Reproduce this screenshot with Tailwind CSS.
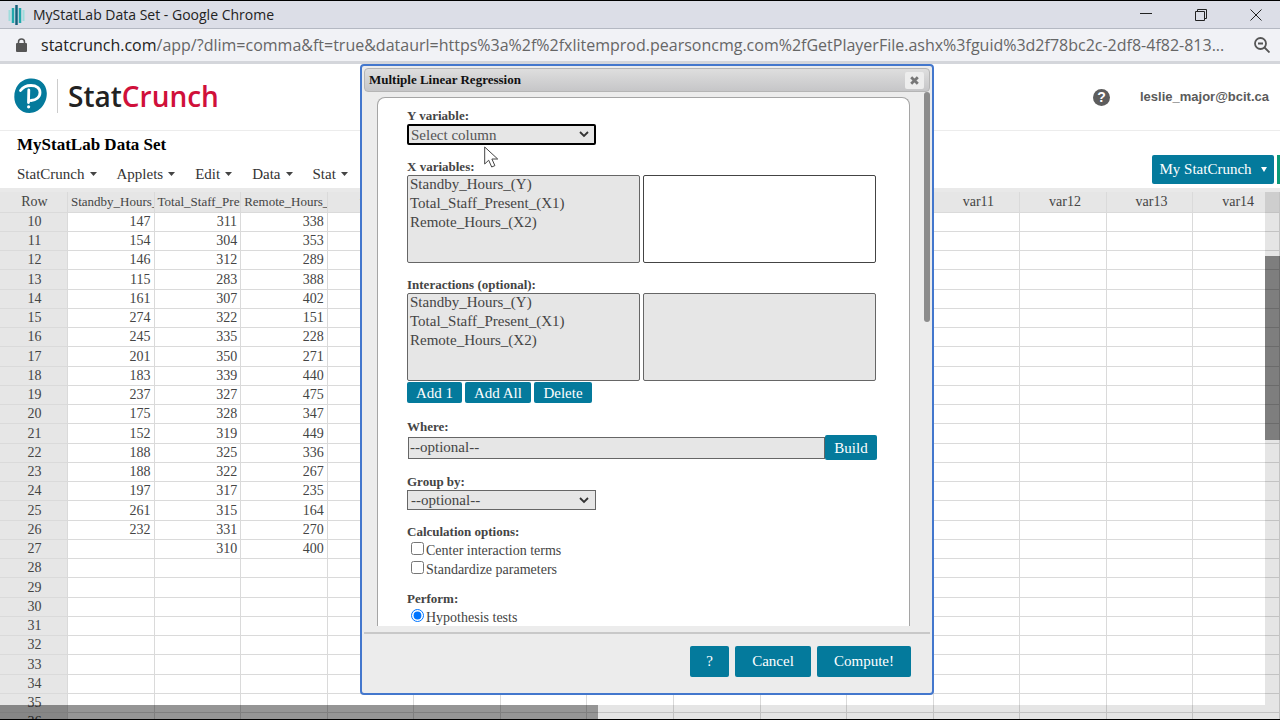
<!DOCTYPE html>
<html lang="en">
<head>
    <meta charset="UTF-8">
    <meta name="viewport" content="width=device-width, initial-scale=1.0">
    <title>MyStatLab Data Set</title>
    <script src="https://cdn.jsdelivr.net/npm/@tailwindcss/browser@4"></script>
</head>
<body class="relative h-screen overflow-hidden flex flex-col border-y border-black bg-white font-['Liberation_Serif',serif] text-[#444]">

    <!-- Window title bar -->
    <div class="h-7 shrink-0 flex items-center justify-between bg-[#dcdee7] border-b border-[#b4b8c2] pl-2 pr-[18px] font-['Open_Sans',sans-serif] text-[#222]">
        <div class="flex items-center gap-2">
            <svg class="w-[17px] h-5" viewBox="0 0 17 20">
                <path d="M1.500 5v11" stroke="#9fdcdc" stroke-width="2"/>
                <path d="M5 3v15" stroke="#23a9ad" stroke-width="2.500"/>
                <path d="M8.500 0v20" stroke="#17607c" stroke-width="2.500"/>
                <path d="M12 3v15" stroke="#23a9ad" stroke-width="2.500"/>
                <path d="M15.500 5v11" stroke="#9fdcdc" stroke-width="2"/>
            </svg>
            <span class="text-sm">MyStatLab Data Set - Google Chrome</span>
        </div>
        <div class="flex items-center gap-[43px]">
            <button type="button" aria-label="Minimize"><svg class="w-3 h-3" viewBox="0 0 12 12"><path d="M0 4.500h12" stroke="#222"/></svg></button>
            <button type="button" aria-label="Restore"><svg class="w-3 h-3" viewBox="0 0 12 12" fill="none" stroke="#222"><path d="M.5 2.500h9v9h-9zM2.500 2.500v-2h9v9h-2"/></svg></button>
            <button type="button" aria-label="Close"><svg class="w-3 h-3" viewBox="0 0 12 12"><path d="M.5.5l11 11M11.500.5l-11 11" stroke="#222"/></svg></button>
        </div>
    </div>

    <!-- Address bar -->
    <div class="h-[35px] shrink-0 flex items-center bg-[#f1f2f6] border-b-3 border-[#d4d6db] pl-4 pr-[10px] font-['Open_Sans',sans-serif]">
        <svg class="w-[11px] h-[14px] shrink-0" viewBox="0 0 11 14">
            <path d="M2.500 6V4a3 3 0 0 1 6 0v2" fill="none" stroke="#555" stroke-width="1.500"/>
            <rect y="5" width="11" height="9" rx="1" fill="#555"/>
        </svg>
        <div class="ml-[14px] flex-1 whitespace-nowrap text-base text-[#666]"><span class="text-[#222]">statcrunch.com</span>/app/?dlim=comma&amp;ft=true&amp;dataurl=https%3a%2f%2fxlitemprod.pearsoncmg.com%2fGetPlayerFile.ashx%3fguid%3d2f78bc2c-2df8-4f82-813...</div>
        <button type="button" aria-label="Zoom">
            <svg class="w-4 h-4" viewBox="0 0 16 16" fill="none" stroke="#555" stroke-width="1.800">
                <circle cx="6.500" cy="6.500" r="5.500"/><path d="M10.500 10.500l5 5M4 6.500h5"/>
            </svg>
        </button>
    </div>

    <!-- App header -->
    <header class="h-[67px] shrink-0 flex items-center justify-between border-b border-[#ececec] pl-[14px] pr-[11px] pb-[3px]">
        <div class="flex items-center">
            <svg class="w-[33px] h-9" viewBox="0 0 33 36">
                <path d="M14 .8C23 -1 32.500 4 32.800 15c.3 10-7 20-17.300 20C6 35 .3 27 .3 19 .3 9 6 2.500 14 .8z" fill="#047a9c"/>
                <path d="M6.500 12.500C9 9 13 7.500 17 7.500c5.500 0 9 2.700 9 7 0 4.700-4 7.500-9 8M14.800 12l-.3 12.500" fill="none" stroke="#fff" stroke-width="2.800" stroke-linecap="round"/>
                <circle cx="14.600" cy="28.800" r="1.600" fill="#fff"/>
            </svg>
            <div class="ml-[10px] h-[34px] border-l border-[#ccc]"></div>
            <div class="ml-[10px] font-['Open_Sans',sans-serif] font-semibold text-[28px] leading-9 text-[#222]">Stat<span class="text-[#d0103a]">Crunch</span></div>
        </div>
        <div class="flex items-center gap-[30px] pt-[3px] font-['Liberation_Sans',sans-serif]">
            <button type="button" aria-label="Help" class="w-[17px] h-[17px] rounded-full bg-[#5d5d5d] text-white text-sm leading-[17px] font-bold">?</button>
            <a href="#" class="text-[13px] font-bold text-[#5a5a5a]">leslie_major@bcit.ca</a>
        </div>
    </header>

    <!-- Data set name and menus -->
    <div class="h-[57px] shrink-0 flex items-end justify-between pl-[17px]">
        <div>
            <h1 class="mb-[3px] text-[17px] leading-6 font-bold text-black">MyStatLab Data Set</h1>
            <nav class="h-7 flex items-center gap-5 text-[15px] text-[#333]">
                <button type="button" class="flex items-center gap-[5px]">StatCrunch<svg class="w-[7px] h-1" viewBox="0 0 7 4"><path d="M0 0h7L3.500 4z" fill="#444"/></svg></button>
                <button type="button" class="flex items-center gap-[5px]">Applets<svg class="w-[7px] h-1" viewBox="0 0 7 4"><path d="M0 0h7L3.500 4z" fill="#444"/></svg></button>
                <button type="button" class="flex items-center gap-[5px]">Edit<svg class="w-[7px] h-1" viewBox="0 0 7 4"><path d="M0 0h7L3.500 4z" fill="#444"/></svg></button>
                <button type="button" class="flex items-center gap-[5px]">Data<svg class="w-[7px] h-1" viewBox="0 0 7 4"><path d="M0 0h7L3.500 4z" fill="#444"/></svg></button>
                <button type="button" class="flex items-center gap-[5px]">Stat<svg class="w-[7px] h-1" viewBox="0 0 7 4"><path d="M0 0h7L3.500 4z" fill="#444"/></svg></button>
            </nav>
        </div>
        <div class="flex gap-[3px] mb-1">
            <button type="button" class="h-[29px] w-[122px] flex items-center justify-center gap-[9px] rounded-xs bg-[#047a9c] text-[15px] text-white">My StatCrunch<svg class="w-[6px] h-[5px]" viewBox="0 0 6 5"><path d="M0 0h6L3 5z" fill="#fff"/></svg></button>
            <div class="w-[3px] bg-[#0a9a78]"></div>
        </div>
    </div>

    <!-- Data table -->
    <main class="relative flex-1 min-h-0 overflow-hidden border-t-4 border-[#e9e9e9]">
        <table class="w-full table-fixed border-separate border-spacing-0 text-sm leading-[18px]">
            <thead>
                <tr id="head" class="h-[21px] bg-[#e6e6e6]">
                    <th class="w-[68px] p-0 pl-[2px] font-normal border-r border-b border-[#dadada]">Row</th>
                </tr>
            </thead>
            <tbody id="rows" class="[&>tr]:h-[19px] [&>tr:nth-child(4n)]:h-[20px]"></tbody>
        </table>
        <div class="absolute right-0 top-0 bottom-[14px] w-[15px] bg-black/10">
            <div class="mt-16 h-[184px] bg-black/45"></div>
        </div>
        <div class="absolute inset-x-0 bottom-0 h-[14px] bg-black/10">
            <div class="w-[598px] h-full bg-black/35"></div>
        </div>
    </main>

    <!-- Regression dialog -->
    <form role="dialog" aria-labelledby="dialog-title" class="absolute left-[360px] top-[63px] w-[574px] h-[631px] flex flex-col rounded border-2 border-[#4377cd] bg-[#ececec] p-[2px]">
        <div class="h-6 shrink-0 flex items-center justify-between rounded border border-[#b5b5b5] bg-linear-to-b from-[#dedede] to-[#c6c6c8] pl-1 pr-[5px]">
            <h2 id="dialog-title" class="text-[13px] font-bold text-[#111]">Multiple Linear Regression</h2>
            <button type="button" aria-label="Close dialog" class="w-[19px] h-[17px] flex items-center justify-center rounded-xs bg-[#ededed]">
                <svg class="w-[9px] h-[9px]" viewBox="0 0 9 9"><path d="M1.200 1.200l6.600 6.600M7.800 1.200L1.200 7.800" stroke="#777" stroke-width="2.800"/></svg>
            </button>
        </div>

        <div class="relative flex-1 min-h-0 pt-[5px] pl-[13px] pr-5 pb-[6px] border-b-2 border-[#c8c8c8]">
            <div class="h-full overflow-hidden rounded-t-lg border border-b-0 border-[#a5a5a5] bg-white pl-[29px] pr-8 pt-2 text-sm leading-[19px]">
                <label for="y-var" class="block h-[18px] text-[13px] font-bold">Y variable:</label>
                <div class="relative w-[189px]">
                    <select id="y-var" class="block w-full h-[21px] appearance-none rounded-xs border-2 border-black bg-[#e6e6e6] px-[2px] text-[15px] leading-4 text-[#555]">
                        <option>Select column</option>
                    </select>
                    <svg class="absolute right-[7px] top-[7px] w-[10px] h-[7px] pointer-events-none" viewBox="0 0 10 7"><path d="M1 1l4 4 4-4" fill="none" stroke="#333" stroke-width="1.800"/></svg>
                </div>

                <label for="x-vars" class="block mt-3 h-[18px] text-[13px] font-bold">X variables:</label>
                <div class="flex gap-[3px]">
                    <select id="x-vars" multiple size="4" class="w-[233px] h-[88px] overflow-hidden rounded-xs border border-[#666] bg-[#e6e6e6] text-[15px] [&>option]:h-[19px] [&>option]:px-[2px] [&>option]:py-0">
                        <option>Standby_Hours_(Y)</option>
                        <option>Total_Staff_Present_(X1)</option>
                        <option>Remote_Hours_(X2)</option>
                    </select>
                    <select multiple size="4" aria-label="Selected X variables" class="w-[233px] h-[88px] overflow-hidden rounded-xs border border-[#444] bg-white"></select>
                </div>

                <label for="interactions" class="block mt-3 h-[18px] text-[13px] font-bold">Interactions (optional):</label>
                <div class="flex gap-[3px]">
                    <select id="interactions" multiple size="4" class="w-[233px] h-[88px] overflow-hidden rounded-xs border border-[#666] bg-[#e6e6e6] text-[15px] [&>option]:h-[19px] [&>option]:px-[2px] [&>option]:py-0">
                        <option>Standby_Hours_(Y)</option>
                        <option>Total_Staff_Present_(X1)</option>
                        <option>Remote_Hours_(X2)</option>
                    </select>
                    <select multiple size="4" aria-label="Selected interactions" class="w-[233px] h-[88px] overflow-hidden rounded-xs border border-[#666] bg-[#e6e6e6]"></select>
                </div>
                <div class="mt-px flex gap-[3px] text-[15px] font-medium text-white">
                    <button type="button" class="w-[55px] h-[21px] leading-5 rounded-xs bg-[#047a9c]">Add 1</button>
                    <button type="button" class="w-[66px] h-[21px] leading-5 rounded-xs bg-[#047a9c]">Add All</button>
                    <button type="button" class="w-[58px] h-[21px] leading-5 rounded-xs bg-[#047a9c]">Delete</button>
                </div>

                <label for="where" class="block mt-[14px] h-[18px] text-[13px] font-bold">Where:</label>
                <div class="flex items-center">
                    <input id="where" type="text" value="--optional--" class="ml-px w-[417px] h-[22px] border border-[#666] bg-[#e6e6e6] px-px text-[15px]">
                    <button type="button" class="w-[52px] h-[25px] rounded-xs bg-[#047a9c] text-[15px] leading-6 font-medium text-white">Build</button>
                </div>

                <label for="group-by" class="block mt-3 h-[18px] text-[13px] font-bold">Group by:</label>
                <div class="relative w-[189px]">
                    <select id="group-by" class="block w-full h-5 appearance-none border border-[#666] bg-[#e6e6e6] px-[3px] text-[15px] leading-4">
                        <option>--optional--</option>
                    </select>
                    <svg class="absolute right-[7px] top-[7px] w-[10px] h-[7px] pointer-events-none" viewBox="0 0 10 7"><path d="M1 1l4 4 4-4" fill="none" stroke="#333" stroke-width="1.800"/></svg>
                </div>

                <fieldset class="mt-3">
                    <legend class="text-[13px] font-bold">Calculation options:</legend>
                    <label class="flex h-[19px] gap-[2px]"><input type="checkbox" class="ml-1 mt-px w-[13px] h-[13px]">Center interaction terms</label>
                    <label class="flex h-[19px] gap-[2px]"><input type="checkbox" class="ml-1 mt-px w-[13px] h-[13px]">Standardize parameters</label>
                </fieldset>

                <fieldset class="mt-[10px]">
                    <legend class="text-[13px] font-bold">Perform:</legend>
                    <label class="flex h-[19px] gap-[2px]"><input type="radio" name="perform" checked class="ml-1 mt-px w-[13px] h-[13px]">Hypothesis tests</label>
                </fieldset>
            </div>
            <div class="absolute right-0 top-0 w-[6px] h-[230px] rounded-full bg-[#8c8c8c]"></div>
        </div>

        <div class="h-[57px] shrink-0 flex items-start justify-end gap-[6px] pt-3 pr-[19px] text-[15px] font-medium text-white">
            <button type="button" class="w-[39px] h-[31px] rounded-xs bg-[#047a9c]">?</button>
            <button type="button" class="w-[76px] h-[31px] rounded-xs bg-[#047a9c]">Cancel</button>
            <button type="submit" class="w-[94px] h-[31px] rounded-xs bg-[#047a9c]">Compute!</button>
        </div>
    </form>

    <!-- Mouse pointer -->
    <svg class="absolute left-[484px] top-[145px] w-[15px] h-[22px] pointer-events-none" viewBox="0 0 15 22">
        <path d="M.7 1v17l4-3.800 3 6.800 3.200-1.400-3-6.600h5.800z" fill="#fff" stroke="#444"/>
    </svg>

    <script>
        const columns = ['Standby_Hours_(Y)', 'Total_Staff_Present_(X1)', 'Remote_Hours_(X2)', 'var4', 'var5', 'var6', 'var7',
            'var8', 'var9', 'var10', 'var11', 'var12', 'var13', 'var14'];
        const data = [
            [147, 311, 338], [154, 304, 353], [146, 312, 289], [115, 283, 388], [161, 307, 402], [274, 322, 151],
            [245, 335, 228], [201, 350, 271], [183, 339, 440], [237, 327, 475], [175, 328, 347], [152, 319, 449],
            [188, 325, 336], [188, 322, 267], [197, 317, 235], [261, 315, 164], [232, 331, 270], ['', 310, 400]
        ];

        document.getElementById('head').insertAdjacentHTML('beforeend', columns.map((name, i) =>
            i < 3
                ? `<th class="p-0 pl-[3px] text-[13px] text-left font-normal whitespace-nowrap overflow-hidden border-r border-b border-[#dadada]">${name}</th>`
                : `<th class="p-0 pl-1 font-normal border-r border-b border-[#dadada]">${name}</th>`
        ).join(''));

        let html = '';
        for (let row = 10; row <= 36; row++) {
            const values = data[row - 10] || [];
            html += `<tr><th class="p-0 pl-[2px] font-normal bg-[#e6e6e6] border-r border-b border-[#dadada]">${row}</th>`;
            html += columns.map((_, i) => `<td class="p-0 pr-[3px] text-right border-r border-b border-[#dadada]">${values[i] ?? ''}</td>`).join('');
            html += '</tr>';
        }
        document.getElementById('rows').innerHTML = html;
    </script>
</body>
</html>
